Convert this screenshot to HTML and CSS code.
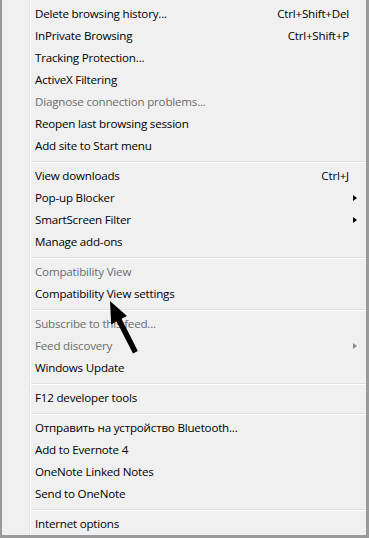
FILE: index.html
```html
<!DOCTYPE html>
<html>
<head>
<meta charset="utf-8">
<link rel="stylesheet" href="styles.css">
</head>
<body>
<div class="menu">
  <div class="item"><span class="label">Delete browsing history...</span><span class="key">Ctrl+Shift+Del</span></div>
  <div class="item"><span class="label">InPrivate Browsing</span><span class="key">Ctrl+Shift+P</span></div>
  <div class="item"><span class="label">Tracking Protection...</span></div>
  <div class="item"><span class="label">ActiveX Filtering</span></div>
  <div class="item disabled"><span class="label">Diagnose connection problems...</span></div>
  <div class="item"><span class="label">Reopen last browsing session</span></div>
  <div class="item"><span class="label">Add site to Start menu</span></div>
  <div class="sep"></div>
  <div class="item"><span class="label">View downloads</span><span class="key">Ctrl+J</span></div>
  <div class="item"><span class="label">Pop-up Blocker</span><span class="sub"></span></div>
  <div class="item"><span class="label">SmartScreen Filter</span><span class="sub"></span></div>
  <div class="item"><span class="label">Manage add-ons</span></div>
  <div class="sep"></div>
  <div class="item disabled"><span class="label">Compatibility View</span></div>
  <div class="item"><span class="label">Compatibility View settings</span></div>
  <div class="sep"></div>
  <div class="item disabled"><span class="label">Subscribe to this feed...</span></div>
  <div class="item disabled"><span class="label">Feed discovery</span><span class="sub"></span></div>
  <div class="item"><span class="label">Windows Update</span></div>
  <div class="sep"></div>
  <div class="item"><span class="label">F12 developer tools</span></div>
  <div class="sep"></div>
  <div class="item"><span class="label">Отправить на устройство Bluetooth...</span></div>
  <div class="item"><span class="label">Add to Evernote 4</span></div>
  <div class="item"><span class="label">OneNote Linked Notes</span></div>
  <div class="item"><span class="label">Send to OneNote</span></div>
  <div class="sep"></div>
  <div class="item"><span class="label">Internet options</span></div>
  <svg class="cursor" width="369" height="538" viewBox="0 0 369 538">
    <polygon points="110,301 127,316 121.5,318.8 137.8,351 133,353.6 116.6,321.6 111.2,324.5" fill="#000"/>
  </svg>
</div>
</body>
</html>
```

FILE: styles.css
```css
html, body {
  margin: 0;
  padding: 0;
  background: #f0f0f0;
}
.menu {
  position: relative;
  box-sizing: border-box;
  width: 369px;
  height: 538px;
  padding-top: 3px;
  background-color: #f0f0f0;
  background-image: linear-gradient(to right, transparent 27px, #e2e3e3 27px, #e2e3e3 28px, #ffffff 28px, #ffffff 29px, transparent 29px);
  border-left: 2px solid #9a9a9a;
  border-right: 3px solid #9a9a9a;
  border-bottom: 3px solid #9a9a9a;
  font-family: "Open Sans", "Noto Sans", sans-serif;
  font-size: 11.6px;
  letter-spacing: -0.2px;
  color: #000;
  overflow: hidden;
}
.item {
  display: flex;
  align-items: center;
  height: 22px;
  padding-left: 33px;
  padding-right: 9px;
  white-space: nowrap;
}
.label {
  flex: 1;
  padding-bottom: 1px;
}
.key {
  margin-right: 8px;
  padding-bottom: 1px;
}
.sub {
  width: 0;
  height: 0;
  border-top: 3.5px solid transparent;
  border-bottom: 3.5px solid transparent;
  border-left: 4px solid #000;
}
.disabled {
  color: #6d6d6d;
}
.disabled .sub {
  border-left-color: #8a8a8a;
}
.sep {
  height: 8px;
  box-sizing: border-box;
  margin-left: 29px;
  padding-top: 4px;
}
.sep::before {
  content: "";
  display: block;
  height: 1px;
  background: #e0e0e0;
  border-bottom: 1px solid #ffffff;
}
.cursor {
  position: absolute;
  left: -2px;
  top: 0;
  pointer-events: none;
}
```
